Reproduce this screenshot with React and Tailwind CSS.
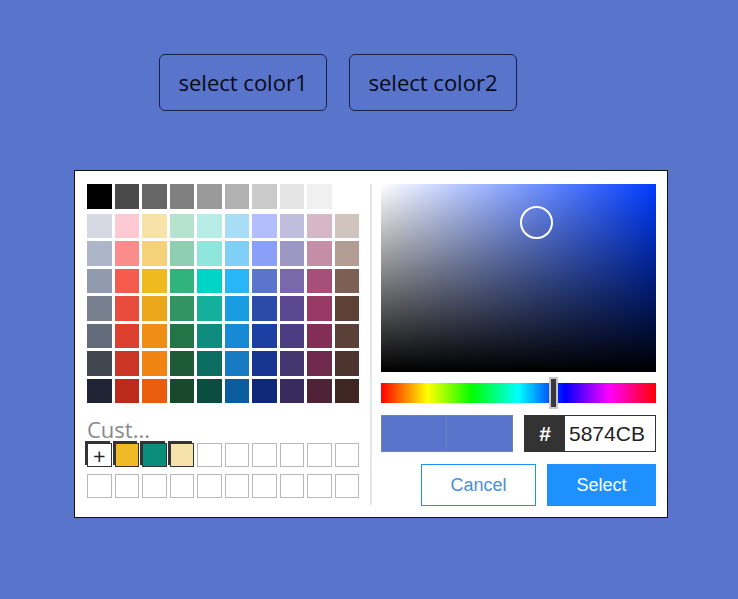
import React from "react";

const grays = ["#000000", "#4a4a4a", "#666666", "#808080", "#999999", "#b1b1b1", "#cbcbcb", "#e4e4e4", "#f0f0f0", "#ffffff"];

const palette = [
  ["#d5d8e0", "#ffc9d3", "#f7e3a9", "#b5e3cd", "#b8ece6", "#a9dcf5", "#b3bffd", "#c1bddd", "#d5b7c8", "#d1c3bd"],
  ["#adb5c9", "#fb8c8c", "#f5d27a", "#8dcfb0", "#8ee6dc", "#7fcff7", "#8a9ff7", "#9d97c3", "#c58ea7", "#b39c92"],
  ["#929aaf", "#f55c4d", "#eeba1f", "#30b37d", "#00d4c5", "#28b6f6", "#5c75cc", "#7b68ab", "#a64f79", "#7d6054"],
  ["#78808f", "#e84c3d", "#eaa71a", "#329462", "#14b09c", "#189de2", "#2c4ba9", "#5b4891", "#963964", "#5e4037"],
  ["#646b7b", "#dc3f2d", "#ee8e14", "#237547", "#0e8c7e", "#178ad5", "#1c3fa3", "#4b3d82", "#832f55", "#5a4037"],
  ["#40474f", "#cb3525", "#f08312", "#1f5a37", "#0b6c60", "#167bc1", "#173591", "#44366f", "#6d2a4a", "#4e342e"],
  ["#1e2433", "#bc2a1c", "#e95d0c", "#18492d", "#0b4d3f", "#0b5d9e", "#0d2978", "#3b2a5e", "#4f2235", "#3e2723"],
];

const custom = ["#efba26", "#0b8d7b", "#f6e3ac"];

const Swatch = ({ color }) => (
  <div className="h-[24.5px]" style={{ backgroundColor: color }} />
);

export default function App() {
  return (
    <div className="w-full h-[599px] bg-[#5874CB] overflow-hidden" style={{ fontFamily: '"Open Sans", sans-serif' }}>
      {/* trigger buttons */}
      <div className="flex gap-[22px] pt-[54px] pl-[159px]">
        <button className="w-[168px] h-[57px] border border-[#1a1f4a] rounded-[6px] text-[22px] text-[#080a18]">
          select color1
        </button>
        <button className="w-[168px] h-[57px] border border-[#1a1f4a] rounded-[6px] text-[22px] text-[#080a18]">
          select color2
        </button>
      </div>

      {/* picker dialog */}
      <div className="mt-[59px] ml-[74px] w-[594px] h-[348px] bg-white border border-[#111] flex">
        {/* left: palette */}
        <div className="pl-[12px] pt-[13px] w-[295px]">
          <div className="grid grid-cols-10 gap-x-[3px] w-[272px]">
            {grays.map((c, i) => (
              <Swatch key={i} color={c} />
            ))}
          </div>
          <div className="grid grid-cols-10 gap-x-[3px] gap-y-[3px] w-[272px] mt-[5px]">
            {palette.flat().map((c, i) => (
              <Swatch key={i} color={c} />
            ))}
          </div>
          <div className="mt-[14px] text-[22px] leading-[24px] text-[#8a8a8a]">Cust...</div>
          <div className="grid grid-cols-10 gap-x-[3px] gap-y-[7px] w-[272px] mt-[2px]">
            <div className="h-[24px] border border-[#333] shadow-[-2px_-2px_0_#333] flex items-center justify-center text-[22px] leading-none text-[#222]">
              +
            </div>
            {custom.map((c, i) => (
              <div key={i} className="h-[24px] border border-[#333] shadow-[-2px_-2px_0_#333]" style={{ backgroundColor: c }} />
            ))}
            {Array.from({ length: 16 }).map((_, i) => (
              <div key={i} className="h-[24px] border border-[#b8b8b8]" />
            ))}
          </div>
        </div>

        {/* divider */}
        <div className="w-[2px] bg-[#e6e6e6] mt-[13px] mb-[12px]" />

        {/* right: picker */}
        <div className="flex-1 pl-[9px] pt-[13px]">
          <div
            className="relative w-[275px] h-[188px]"
            style={{
              background:
                "linear-gradient(to top, #000, rgba(0,0,0,0)), linear-gradient(to right, #fff, hsl(226,100%,50%))",
            }}
          >
            <div className="absolute left-[139px] top-[22px] w-[33px] h-[33px] rounded-full border-2 border-white" />
          </div>
          <div
            className="relative mt-[11px] w-[275px] h-[20px]"
            style={{
              background:
                "linear-gradient(to right, #f00 0%, #ff0 17%, #0f0 33%, #0ff 50%, #00f 67%, #f0f 83%, #f00 100%)",
            }}
          >
            <div className="absolute left-[168px] top-[-6px] w-[9px] h-[32px] bg-[#3a3a3a] border-2 border-[#c8c8c8]" />
          </div>
          <div className="flex w-[275px] mt-[12px] h-[37px]">
            <div className="w-[132px] flex border border-[#7080b8]">
              <div className="w-[65px] bg-[#5874CB] border-r border-[#6c80c4]" />
              <div className="flex-1 bg-[#5874CB]" />
            </div>
            <div className="ml-[11px] w-[132px] flex border border-[#333]" style={{ fontFamily: '"Liberation Sans", Arial, sans-serif' }}>
              <div className="w-[40px] bg-[#333] text-white text-[21px] font-bold flex items-center justify-center">#</div>
              <div className="flex-1 flex items-center pl-[4px] text-[21px] text-[#222]">5874CB</div>
            </div>
          </div>
          <div className="flex w-[275px] justify-end gap-[11px] mt-[12px]" style={{ fontFamily: '"Liberation Sans", Arial, sans-serif' }}>
            <button className="w-[115px] h-[42px] border border-[#1e90ff] text-[#4a8fd8] text-[18px]">Cancel</button>
            <button className="w-[109px] h-[42px] bg-[#1e90ff] text-white text-[18px]">Select</button>
          </div>
        </div>
      </div>
    </div>
  );
}
